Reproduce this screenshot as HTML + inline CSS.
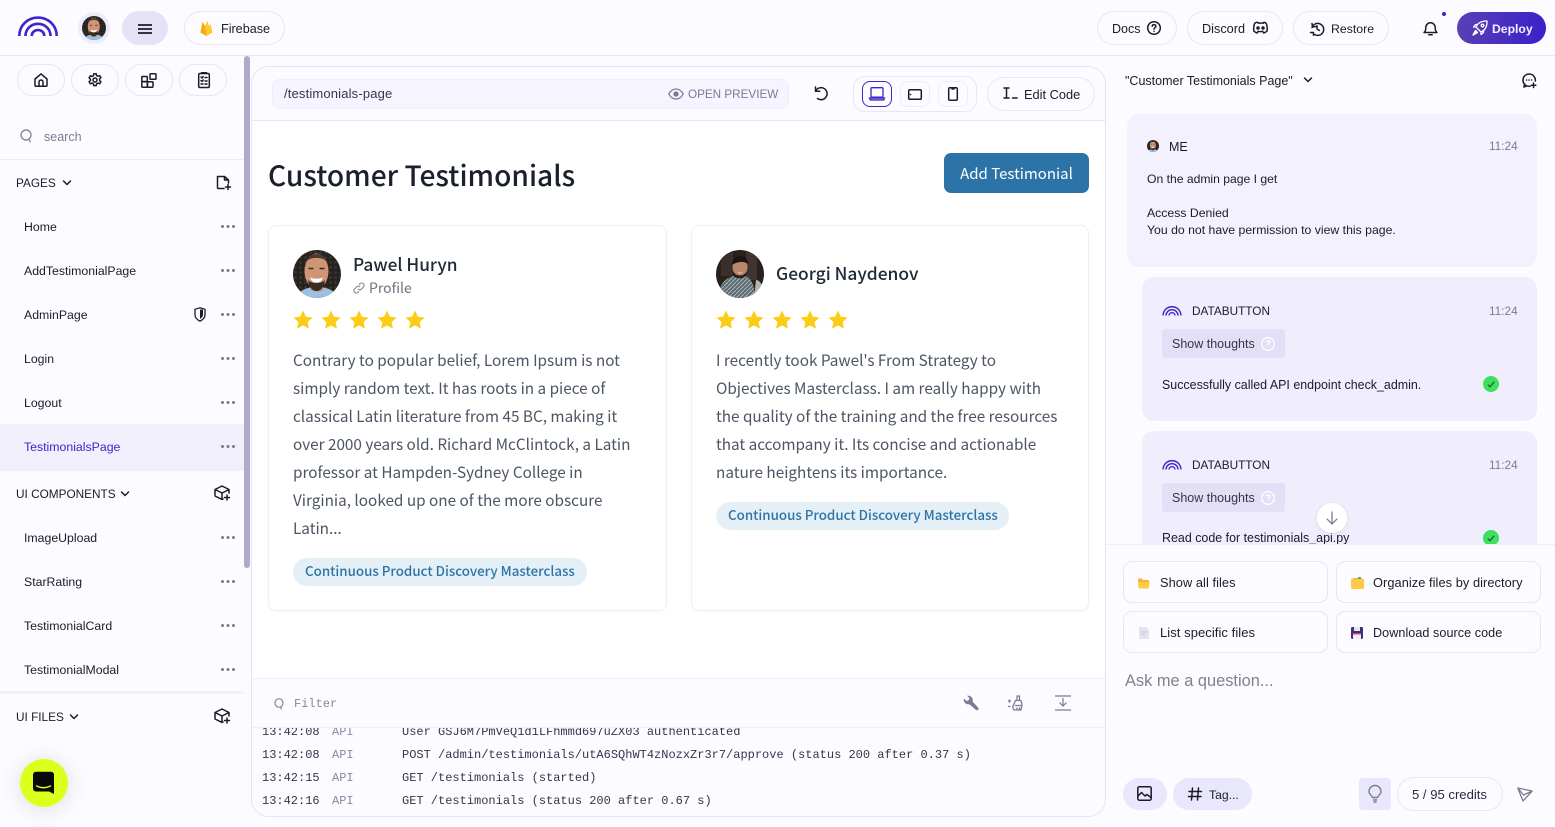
<!DOCTYPE html>
<html><head><meta charset="utf-8"><title>Databutton</title>
<style>
*{box-sizing:border-box}
html,body{margin:0;padding:0;width:1555px;height:827px;overflow:hidden;background:#fcfbff;font-family:"Liberation Sans",sans-serif;color:#1c1b2a}
.a{position:absolute}
.t{position:absolute;white-space:nowrap;line-height:16px;font-size:12.3px;color:#1c1b2a}
.n{font-family:"Noto Sans CJK JP","Liberation Sans",sans-serif}
.pill{position:absolute;border:1px solid #e8e5fa;border-radius:17px;background:#fcfbff}
svg{position:absolute;overflow:visible}
.i{fill:none;stroke:#1c1b2a;stroke-width:1.5;stroke-linecap:round;stroke-linejoin:round}
.dots{position:absolute;left:221px;width:14px;height:3px;background:radial-gradient(circle at 1.5px 1.5px,#7d7a94 1.4px,transparent 1.6px) 0 0/5.5px 3px repeat-x}
.body{font-size:15.3px;color:#4b5563}
.chip{position:absolute;height:28px;border-radius:14px;background:#e5eff6;color:#2c74a8;font-size:13.35px;font-weight:500;line-height:26px;padding-left:12px;white-space:nowrap}
.mono{font-family:"Liberation Mono",monospace;font-size:12px;color:#37354a}
.g{color:#8a87a0}
.sug{position:absolute;border:1px solid #e8e5fa;border-radius:9px;width:205px;height:42px}
.s{font-size:12.8px;letter-spacing:.06px}
.h{font-size:11.8px}
</style></head><body>

<svg width="0" height="0" style="left:0;top:0">
<defs>
<clipPath id="cc"><circle cx="24" cy="24" r="24"/></clipPath>
<pattern id="foam" width="5" height="5" patternUnits="userSpaceOnUse"><rect width="5" height="5" fill="#26231f"/><circle cx="2.500" cy="2.500" r="1.300" fill="#3c3834"/></pattern>
<pattern id="knit" width="4" height="4" patternUnits="userSpaceOnUse"><rect width="4" height="4" fill="#5c6a72"/><path d="M0 4 4 0" stroke="#a9b5bb" stroke-width="1"/></pattern>
<symbol id="paw" viewBox="0 0 48 48"><g clip-path="url(#cc)"><rect width="48" height="48" fill="url(#foam)"/><path d="M3 50c1-9 10-13 21-13s20 4 21 13z" fill="#9cbfe2"/><path d="M18 32h12v8c-3 2-9 2-12 0z" fill="#c48c6c"/><ellipse cx="23.500" cy="21" rx="12" ry="17.500" fill="#cf9576"/><path d="M12 17c0-8 5-13 11.500-13S35 9 35 17c-1-5-2-7-5-8-4-1.500-9-1.500-13 0-3 1-4 3-5 8z" fill="#4d3a2e"/><path d="M15 30c1 7 4 11 8.500 11S31 37 32 30c-2 2-5 3-8.500 3S17 32 15 30z" fill="#3a2a22"/><path d="M17 27.500q6.500 2.500 13 0-1.500 5-6.500 5t-6.500-5z" fill="#fff"/><path d="M15.500 18.500h5M26.500 18.500h5" stroke="#3a2a22" stroke-width="1.400"/></g></symbol>
</defs>
</svg>

<!-- header -->
<div class="a" style="left:0;top:55px;width:1555px;height:1px;background:#e8e5f4"></div>
<svg style="left:18px;top:16px" width="40" height="21" viewBox="0 0 40 21" fill="none" stroke="#3d25c9" stroke-width="2.6"><path d="M1.300 20C1.300 9.500 9.600 1.600 20 1.600S38.700 9.500 38.700 20"/><path d="M7.500 20C7.500 13 13 7.800 20 7.800S32.500 13 32.500 20"/><path d="M13.700 20C13.700 16.500 16.500 14 20 14S26.300 16.500 26.300 20"/></svg>
<div class="a" style="left:78px;top:12px;width:32px;height:32px;border-radius:50%;background:#eeecfb"></div>
<svg style="left:82px;top:16px" width="24" height="24"><use href="#paw" width="24" height="24"/></svg>
<div class="a" style="left:122px;top:11px;width:46px;height:34px;border-radius:17px;background:#e5e2f7"></div>
<svg style="left:138px;top:24px" width="14" height="10"><path d="M0 1h14M0 5h14M0 9h14" stroke="#1c1b2a" stroke-width="1.800"/></svg>
<div class="pill" style="left:184px;top:11px;width:101px;height:34px"></div>
<svg style="left:200px;top:20px" width="13" height="16" viewBox="0 0 13 16"><path d="M.5 12.500 2.500 2 5 6 7.500.5 9 6l1.500-2L12.500 12.500 6.500 16z" fill="#ffca28"/><path d="M.5 12.500 2.500 2 5 6 6.500 16z" fill="#f6a71d"/></svg>
<div class="t" style="left:221px;top:21px;font-size:12.600px">Firebase</div>

<div class="pill" style="left:1097px;top:11px;width:80px;height:34px"></div>
<div class="t" style="left:1112px;top:21px;font-size:12.500px">Docs</div>
<svg style="left:1147px;top:21px" width="14" height="14" viewBox="0 0 14 14" class="i"><circle cx="7" cy="7" r="6.300"/><path d="M5.200 5.300c.2-2.300 3.700-2 3.700 0 0 1.400-1.900 1.400-1.900 2.800M7 10.300v.1"/></svg>
<div class="pill" style="left:1187px;top:11px;width:96px;height:34px"></div>
<div class="t" style="left:1202px;top:21px;font-size:12.700px">Discord</div>
<svg style="left:1253px;top:21px" width="15" height="13" viewBox="0 0 15 13" class="i" stroke-width="1.300"><path d="M4 1.200C2.500 1.500 1.800 2 1.500 2.800.8 4.500.5 7 .8 10c1 1 2 1.700 3.400 2l1-1.700c1.500.4 3 .4 4.500 0l1 1.700c1.400-.3 2.400-1 3.400-2 .3-3-.1-5.500-.7-7.200-.3-.8-1-1.300-2.500-1.600l-.6 1c-1.500-.3-2.900-.3-4.600 0z"/><circle cx="5" cy="7" r="1" fill="#1c1b2a"/><circle cx="10" cy="7" r="1" fill="#1c1b2a"/></svg>
<div class="pill" style="left:1293px;top:11px;width:96px;height:34px"></div>
<svg style="left:1310px;top:22px" width="14" height="14" viewBox="0 0 14 14" class="i"><path d="M2 5.500A6 6 0 1 1 4.500 12.500M2 1.500 2.500 5l3.300-.5M7 3.800V7l2.500 1.500M.5 10.500h3v2.800"/></svg>
<div class="t" style="left:1331px;top:21px;font-size:12.300px">Restore</div>
<svg style="left:1423px;top:21px" width="15" height="15" viewBox="0 0 15 15" class="i"><path d="M1 11.500c1.500-1 1.800-2.500 1.800-5a4.700 4.700 0 0 1 9.400 0c0 2.500.3 4 1.800 5zM5.800 13.800h3.400"/></svg>
<div class="a" style="left:1442px;top:12px;width:4px;height:4px;border-radius:50%;background:#3d25c9"></div>
<div class="a" style="left:1457px;top:12px;width:89px;height:32px;border-radius:16px;background:linear-gradient(100deg,#5a41b4,#3a1fcb)"></div>
<svg style="left:1472px;top:20px" width="16" height="16" viewBox="0 0 16 16" fill="none" stroke="#fff" stroke-width="1.300" stroke-linejoin="round"><path d="M4 7C6 2.500 10 .8 15 1c.2 5-1.500 9-6 11L4 7zM4 7H1.500l2-2.500H6M9 12v2.500l2.500-2V10"/><circle cx="10.500" cy="5.500" r="1.300"/><path d="M3.500 10.500 1 15l4.500-2.500z" fill="#fff"/></svg>
<div class="t" style="left:1492px;top:21px;font-size:12.200px;font-weight:700;color:#f2f0ff">Deploy</div>

<!-- sidebar -->
<div class="pill" style="left:17px;top:64px;width:48px;height:32px"></div>
<div class="pill" style="left:71px;top:64px;width:48px;height:32px"></div>
<div class="pill" style="left:125px;top:64px;width:48px;height:32px"></div>
<div class="pill" style="left:179px;top:64px;width:48px;height:32px"></div>
<svg style="left:34px;top:73px" width="14" height="14" viewBox="0 0 14 14" class="i"><path d="M1 6 7 .9 13 6v6.200a1 1 0 0 1-1 1H2a1 1 0 0 1-1-1zM5 13v-4a2 2 0 0 1 4 0v4"/></svg>
<svg style="left:88px;top:73px" width="14" height="14" viewBox="0 0 14 14" class="i"><path d="M5.800.8h2.400l.4 1.800 1.400.7 1.700-.7 1.200 2-1.300 1.300v1.600l1.300 1.300-1.200 2-1.700-.7-1.400.7-.4 1.800H5.800l-.4-1.800-1.400-.7-1.700.7-1.200-2 1.300-1.300V6.100L1.100 4.800l1.200-2 1.700.7 1.400-.7z"/><circle cx="7" cy="7" r="2"/></svg>
<svg style="left:141px;top:73px" width="16" height="15" viewBox="0 0 16 15" class="i"><rect x=".8" y="3.500" width="5.500" height="5" rx=".8"/><rect x=".8" y="8.800" width="5.500" height="5.400" rx=".8"/><rect x="6.500" y="8.800" width="5.500" height="5.400" rx=".8"/><rect x="9" y=".8" width="6" height="5.500" rx=".8"/></svg>
<svg style="left:198px;top:72px" width="12" height="16" viewBox="0 0 12 16" class="i" stroke-width="1.300"><rect x=".7" y="1.500" width="10.600" height="14" rx="1.200"/><path d="M3.500 1.500V.7h5v.8M3 5l1 1 1.200-1.500M7 5.500h2M3 8.500l1 1 1.200-1.500M7 9h2M3 12h2M7 12h2"/></svg>
<svg style="left:20px;top:129px" width="13" height="14" viewBox="0 0 13 14" fill="none" stroke="#8a87a0" stroke-width="1.400"><circle cx="6" cy="6" r="5"/><path d="M9 10.500 10.500 13"/></svg>
<div class="t" style="left:44px;top:129px;font-size:12.500px;color:#7d7a94">search</div>
<div class="a" style="left:0;top:159px;width:244px;height:1px;background:#eeecf8"></div>

<div class="t h" style="left:16px;top:175px">PAGES</div>
<svg style="left:63px;top:180px" width="8" height="6" class="i"><path d="M.5 1 4 4.500 7.500 1"/></svg>
<svg style="left:216px;top:175px" width="15" height="15" viewBox="0 0 15 15" class="i"><path d="M8 13.500H2.500a1 1 0 0 1-1-1v-11h7l4 3.500v3M8.500 1.500V5h4M12 9.500v5M9.500 12h5"/></svg>

<div class="t" style="left:24px;top:219px">Home</div><div class="dots" style="top:225px"></div>
<div class="t" style="left:24px;top:263px">AddTestimonialPage</div><div class="dots" style="top:269px"></div>
<div class="t" style="left:24px;top:307px">AdminPage</div><div class="dots" style="top:313px"></div>
<svg style="left:194px;top:307px" width="12" height="15" viewBox="0 0 12 15"><path d="M6 .8 11 2.300v5.500c0 3-2.200 5-5 6.400C3.200 12.800 1 10.800 1 7.800V2.300z" fill="none" stroke="#1c1b2a" stroke-width="1.300"/><path d="M6 2.500h3v5c0 2-1.200 3.400-3 4.300z" fill="#1c1b2a"/></svg>
<div class="t" style="left:24px;top:351px">Login</div><div class="dots" style="top:357px"></div>
<div class="t" style="left:24px;top:395px">Logout</div><div class="dots" style="top:401px"></div>
<div class="a" style="left:0;top:424px;width:244px;height:47px;background:#f1effc"></div>
<div class="t" style="left:24px;top:439px;color:#3d25c9">TestimonialsPage</div><div class="dots" style="top:445px"></div>

<div class="t h" style="left:16px;top:486px">UI COMPONENTS</div>
<svg style="left:121px;top:491px" width="8" height="6" class="i"><path d="M.5 1 4 4.500 7.500 1"/></svg>
<svg style="left:214px;top:485px" width="17" height="16" viewBox="0 0 17 16" class="i"><path d="M9 14 8 14.400 1 11V4.500L8 1l7 3.500V8M1 4.500 8 8l7-3.500M8 8v6.400M13 10v5M10.500 12.500h5"/></svg>

<div class="t" style="left:24px;top:530px">ImageUpload</div><div class="dots" style="top:536px"></div>
<div class="t" style="left:24px;top:574px">StarRating</div><div class="dots" style="top:580px"></div>
<div class="t" style="left:24px;top:618px">TestimonialCard</div><div class="dots" style="top:624px"></div>
<div class="t" style="left:24px;top:662px">TestimonialModal</div><div class="dots" style="top:668px"></div>
<div class="a" style="left:0;top:691px;width:244px;height:3px;background:#f1effa"></div>
<div class="t h" style="left:16px;top:709px">UI FILES</div>
<svg style="left:70px;top:714px" width="8" height="6" class="i"><path d="M.5 1 4 4.500 7.500 1"/></svg>
<svg style="left:214px;top:708px" width="17" height="16" viewBox="0 0 17 16" class="i"><path d="M9 14 8 14.400 1 11V4.500L8 1l7 3.500V8M1 4.500 8 8l7-3.500M8 8v6.400M13 10v5M10.500 12.500h5"/></svg>
<div class="a" style="left:244px;top:56px;width:6px;height:512px;border-radius:3px;background:#aeaaca"></div>

<div class="a" style="left:20px;top:759px;width:48px;height:48px;border-radius:50%;background:#dcff1c;box-shadow:0 2px 24px rgba(0,0,0,.12)"></div>
<svg style="left:33px;top:771px" width="22" height="24" viewBox="0 0 22 24"><path d="M3 .8h15a3 3 0 0 1 3 3V23l-5-2.500H3a3 3 0 0 1-3-3V3.800A3 3 0 0 1 3 .8z" fill="#0a0a0a"/><path d="M3.500 15q7 3.500 14 0" fill="none" stroke="#dcff1c" stroke-width="1.400" stroke-linecap="round"/></svg>

<!-- center panel -->
<div class="a" style="left:251px;top:66px;width:855px;height:751px;border:1px solid #e6e3f8;border-radius:18px;background:#fff;overflow:hidden">
  <div class="a" style="left:0;top:0;width:853px;height:54px;background:#fcfbff;border-bottom:1px solid #e8e5fa"></div>
  <div class="a" style="left:0;top:611px;width:853px;height:50px;background:#fcfbff;border-top:1px solid #efedf8;border-bottom:1px solid #efedf8"></div>
  <div class="a" style="left:0;top:661px;width:853px;height:90px;background:#fcfbff"></div>
</div>
<div class="a" style="left:272px;top:79px;width:517px;height:30px;border:1px solid #efedfb;border-radius:8px;background:#f6f4fe"></div>
<div class="t" style="left:284px;top:86px;font-size:13px;letter-spacing:.16px;color:#37354a">/testimonials-page</div>
<svg style="left:668px;top:88px" width="16" height="12" viewBox="0 0 16 12" fill="none" stroke="#7d7a94" stroke-width="1.300"><path d="M.8 6C2.500 2.800 5 1 8 1s5.500 1.800 7.200 5C13.500 9.200 11 11 8 11S2.500 9.200.8 6z"/><circle cx="8" cy="6" r="2" fill="#7d7a94"/></svg>
<div class="t" style="left:688px;top:87px;font-size:11.700px;color:#7d7a94">OPEN PREVIEW</div>
<svg style="left:814px;top:86px" width="15" height="15" viewBox="0 0 15 15" class="i"><path d="M1.500 1v4.300h4.300M1.700 5A6 6 0 1 1 3.500 12.500"/></svg>
<div class="a" style="left:853px;top:76px;width:124px;height:36px;border:1px solid #e8e5fa;border-radius:12px"></div>
<div class="a" style="left:862px;top:81px;width:30px;height:26px;border:1.300px solid #3d25c9;border-radius:8px"></div>
<svg style="left:869px;top:87px" width="16" height="14" viewBox="0 0 16 14" fill="none" stroke="#3d25c9" stroke-width="1.300"><rect x="2" y=".7" width="12" height="9.500" rx="1"/><path d="M.5 11h15l-.8 2H1.300z" fill="#b5a9ef"/></svg>
<div class="a" style="left:900px;top:81px;width:30px;height:26px;border:1px solid #eeecfb;border-radius:8px"></div>
<svg style="left:908px;top:89px" width="14" height="11" viewBox="0 0 14 11" class="i" stroke-width="1.300"><rect x=".7" y=".7" width="12.600" height="9.600" rx="1.200"/><path d="M2.500 5.500h.1"/></svg>
<div class="a" style="left:938px;top:81px;width:30px;height:26px;border:1px solid #eeecfb;border-radius:8px"></div>
<svg style="left:948px;top:87px" width="10" height="14" viewBox="0 0 10 14" class="i" stroke-width="1.300"><rect x=".7" y=".7" width="8.600" height="12.600" rx="1.300"/><path d="M4 2h2"/></svg>
<div class="pill" style="left:987px;top:77px;width:108px;height:34px"></div>
<svg style="left:1003px;top:87px" width="15" height="13" viewBox="0 0 15 13" class="i" stroke-linecap="butt"><path d="M1 1h5M3.500 1v10M1 11h5M9.500 11H14"/></svg>
<div class="t" style="left:1024px;top:87px;font-size:12.800px">Edit Code</div>

<!-- content -->
<div class="t n" id="h" style="left:268px;top:155px;font-size:28.150px;line-height:40px;color:#1a202c;font-weight:500">Customer Testimonials</div>
<div class="a n" style="left:944px;top:153px;width:145px;height:40px;border-radius:7px;background:#2c74a8;color:#fff;font-size:15px;line-height:41px;text-align:center">Add Testimonial</div>

<div class="a" style="left:268px;top:225px;width:399px;height:386px;border:1px solid #f0eff4;border-radius:8px;box-shadow:0 1px 2px rgba(0,0,0,.03)"></div>
<div class="a" style="left:691px;top:225px;width:398px;height:386px;border:1px solid #f0eff4;border-radius:8px;box-shadow:0 1px 2px rgba(0,0,0,.03)"></div>

<svg style="left:293px;top:250px" width="48" height="48"><use href="#paw" width="48" height="48"/></svg>
<div class="t n" style="left:353px;top:253px;font-size:17.300px;line-height:22px;color:#1f2937;font-weight:500">Pawel Huryn</div>
<svg style="left:353px;top:282px" width="12" height="12" viewBox="0 0 12 12" fill="none" stroke="#7f8794" stroke-width="1.100"><path d="M5 7a2.300 2.300 0 0 0 3.400.1l2-2A2.400 2.400 0 0 0 7 1.700L6 2.700M7 5a2.300 2.300 0 0 0-3.400-.1l-2 2A2.400 2.400 0 0 0 5 10.300l1-1"/></svg>
<div class="t n" style="left:369px;top:280px;font-size:14px;color:#6b7280">Profile</div>
<svg style="left:293px;top:310px" width="132" height="20" viewBox="0 0 132 20" fill="#fccc16"><path id="s" d="M10 .5l2.900 6.200 6.700.8-5 4.600 1.400 6.700L10 15.400l-6 3.400 1.400-6.700-5-4.600 6.700-.8z"/><use href="#s" x="28"/><use href="#s" x="56"/><use href="#s" x="84"/><use href="#s" x="112"/></svg>

<div class="t n body" style="left:293px;top:346px;line-height:28px">Contrary to popular belief, Lorem Ipsum is not</div>
<div class="t n body" style="left:293px;top:374px;line-height:28px">simply random text. It has roots in a piece of</div>
<div class="t n body" style="left:293px;top:402px;line-height:28px">classical Latin literature from 45 BC, making it</div>
<div class="t n body" style="left:293px;top:430px;line-height:28px">over 2000 years old. Richard McClintock, a Latin</div>
<div class="t n body" style="left:293px;top:458px;line-height:28px">professor at Hampden-Sydney College in</div>
<div class="t n body" style="left:293px;top:486px;line-height:28px">Virginia, looked up one of the more obscure</div>
<div class="t n body" style="left:293px;top:514px;line-height:28px">Latin...</div>
<div class="chip n" style="left:293px;top:558px;width:294px">Continuous Product Discovery Masterclass</div>

<svg style="left:716px;top:250px" width="48" height="48" viewBox="0 0 48 48"><g clip-path="url(#cc)"><rect width="48" height="48" fill="#2a211d"/><rect x="5" y="0" width="12" height="26" fill="#3a2f29"/><rect x="30" y="0" width="11" height="30" fill="#3f342e"/><path d="M40 30c4 0 8 6 8 18H38z" fill="#b5b3ac"/><path d="M2 50c0-14 6-21 15-24 5 3 9 3 13 0 6 3 9 10 9 24z" fill="url(#knit)"/><ellipse cx="24" cy="17" rx="7.500" ry="9.500" fill="#b9876a"/><path d="M16 15c0-6 4-9 8-9 5 0 8 3 8 8-4-3-10-3-16 1z" fill="#1b1512"/><path d="M17 21c3 6 11 6 14 0l-1 5-6 2-6-2z" fill="#2b1d17"/><path d="M21 22q3 1.500 6 0-3 3-6 0z" fill="#fff"/></g></svg>
<div class="t n" style="left:776px;top:263px;font-size:17.400px;line-height:22px;color:#1f2937;font-weight:500">Georgi Naydenov</div>
<svg style="left:716px;top:310px" width="132" height="20" viewBox="0 0 132 20" fill="#fccc16"><use href="#s"/><use href="#s" x="28"/><use href="#s" x="56"/><use href="#s" x="84"/><use href="#s" x="112"/></svg>
<div class="t n body" style="left:716px;top:346px;line-height:28px">I recently took Pawel's From Strategy to</div>
<div class="t n body" style="left:716px;top:374px;line-height:28px">Objectives Masterclass. I am really happy with</div>
<div class="t n body" style="left:716px;top:402px;line-height:28px">the quality of the training and the free resources</div>
<div class="t n body" style="left:716px;top:430px;line-height:28px">that accompany it. Its concise and actionable</div>
<div class="t n body" style="left:716px;top:458px;line-height:28px">nature heightens its importance.</div>
<div class="chip n" style="left:716px;top:502px;width:293px">Continuous Product Discovery Masterclass</div>

<!-- logs -->
<svg style="left:274px;top:698px" width="10" height="12" viewBox="0 0 10 12" fill="none" stroke="#8a87a0" stroke-width="1.200"><ellipse cx="5" cy="5" rx="4" ry="4.300"/><path d="M6.500 9 7.500 11.500"/></svg>
<div class="t mono g" style="left:294px;top:696px">Filter</div>
<svg style="left:963px;top:695px" width="16" height="16" viewBox="0 0 16 16" fill="#7d7a94"><path d="M1 3.500 3.500 6 6 5 6.500 3 4 .8A4.500 4.500 0 0 1 9.500 6.500L15 12.500a1.500 1.500 0 0 1-2.300 2.300L6.500 9.200A4.500 4.500 0 0 1 1 3.500z"/></svg>
<svg style="left:1007px;top:695px" width="16" height="16" viewBox="0 0 16 16" fill="none" stroke="#7d7a94" stroke-width="1.300" stroke-linejoin="round"><path d="M10 1h2.500v4.500H10zM8.500 5.500h5.500l1 4-1 5.500H7c-1.500-1.500-1.500-4 0-6zM8 10.500h6M10 15v-2.500M12.500 15v-2.500M1 6h3M2.500 4.500v3M1 11.500h2.500"/></svg>
<svg style="left:1055px;top:695px" width="16" height="16" viewBox="0 0 16 16" fill="none" stroke="#7d7a94" stroke-width="1.200"><path d="M0 1h16M0 15h16M8 3v8M4.500 7.500 8 11l3.500-3.500"/></svg>

<div class="a" style="left:252px;top:728px;width:853px;height:88px;overflow:hidden">
 <div class="t mono" style="left:10px;top:-4px">13:42:08</div><div class="t mono g" style="left:80px;top:-4px">API</div><div class="t mono" style="left:150px;top:-4px">User GSJ6M7PmVeQ1d1LFhmmd697uZX03 authenticated</div>
 <div class="t mono" style="left:10px;top:19px">13:42:08</div><div class="t mono g" style="left:80px;top:19px">API</div><div class="t mono" style="left:150px;top:19px">POST /admin/testimonials/utA6SQhWT4zNozxZr3r7/approve (status 200 after 0.37 s)</div>
 <div class="t mono" style="left:10px;top:42px">13:42:15</div><div class="t mono g" style="left:80px;top:42px">API</div><div class="t mono" style="left:150px;top:42px">GET /testimonials (started)</div>
 <div class="t mono" style="left:10px;top:65px">13:42:16</div><div class="t mono g" style="left:80px;top:65px">API</div><div class="t mono" style="left:150px;top:65px">GET /testimonials (status 200 after 0.67 s)</div>
</div>

<!-- right panel -->
<div class="t" style="left:1125px;top:73px;font-size:12.500px">"Customer Testimonials Page"</div>
<svg style="left:1304px;top:77px" width="8" height="6" class="i"><path d="M.5 1 4 4.500 7.500 1"/></svg>
<svg style="left:1522px;top:73px" width="15" height="15" viewBox="0 0 15 15" class="i" stroke-width="1.300"><path d="M8 13.300A6.200 6.200 0 1 1 13.300 8M2.800 11.200 1.800 14l2.500-1M11.500 10v4.500M9.200 12.200h4.600"/><path d="M4.500 7h.1M7 7h.1M9.500 7h.1"/></svg>

<div class="a" style="left:1127px;top:114px;width:410px;height:153px;border-radius:12px;background:#f3f1fd"></div>
<svg style="left:1147px;top:140px" width="12" height="12"><use href="#paw" width="12" height="12"/></svg>
<div class="t" style="left:1169px;top:139px;font-size:12.500px">ME</div>
<div class="t" style="left:1489px;top:138px;font-size:11.800px;color:#7d7a94">11:24</div>
<div class="t" style="left:1147px;top:171px;font-size:12.150px">On the admin page I get</div>
<div class="t" style="left:1147px;top:205px;font-size:12.250px">Access Denied</div>
<div class="t" style="left:1147px;top:222px;font-size:12.250px">You do not have permission to view this page.</div>

<div class="a" style="left:1142px;top:277px;width:395px;height:144px;border-radius:12px;background:#f0eefc"></div>
<svg style="left:1162px;top:306px" width="20" height="10" viewBox="0 0 40 21" fill="none" stroke="#3d25c9" stroke-width="3"><path d="M1.300 20C1.300 9.500 9.600 1.600 20 1.600S38.700 9.500 38.700 20"/><path d="M7.500 20C7.500 13 13 7.800 20 7.800S32.500 13 32.500 20"/><path d="M13.700 20C13.700 16.500 16.500 14 20 14S26.300 16.500 26.300 20"/></svg>
<div class="t" style="left:1192px;top:303px;font-size:11.800px">DATABUTTON</div>
<div class="t" style="left:1489px;top:303px;font-size:11.800px;color:#7d7a94">11:24</div>
<div class="a" style="left:1162px;top:329px;width:123px;height:29px;border-radius:3px;background:#e3dff6"></div>
<div class="t" style="left:1172px;top:336px;font-size:12.500px;color:#37354a">Show thoughts</div>
<svg style="left:1261px;top:337px" width="14" height="14" viewBox="0 0 14 14" fill="none" stroke="#fff" stroke-width="1.300"><circle cx="7" cy="7" r="6.300"/><path d="M5.300 5.500c.2-2 3.500-1.800 3.500 0 0 1.300-1.800 1.300-1.800 2.600M7 10v.3"/></svg>
<div class="t" style="left:1162px;top:377px;font-size:12.450px">Successfully called API endpoint check_admin.</div>
<div class="a" style="left:1483px;top:376px;width:16px;height:16px;border-radius:50%;background:#3de05f"></div>
<svg style="left:1487px;top:381px" width="8" height="7" fill="none" stroke="#1f5a30" stroke-width="1.200"><path d="M.8 3.500 3 5.800 7.200.8"/></svg>

<div class="a" style="left:1142px;top:431px;width:395px;height:113px;border-radius:12px 12px 0 0;background:#f0eefc"></div>
<svg style="left:1162px;top:460px" width="20" height="10" viewBox="0 0 40 21" fill="none" stroke="#3d25c9" stroke-width="3"><path d="M1.300 20C1.300 9.500 9.600 1.600 20 1.600S38.700 9.500 38.700 20"/><path d="M7.500 20C7.500 13 13 7.800 20 7.800S32.500 13 32.500 20"/><path d="M13.700 20C13.700 16.500 16.500 14 20 14S26.300 16.500 26.300 20"/></svg>
<div class="t" style="left:1192px;top:457px;font-size:11.800px">DATABUTTON</div>
<div class="t" style="left:1489px;top:457px;font-size:11.800px;color:#7d7a94">11:24</div>
<div class="a" style="left:1162px;top:483px;width:123px;height:29px;border-radius:3px;background:#e3dff6"></div>
<div class="t" style="left:1172px;top:490px;font-size:12.500px;color:#37354a">Show thoughts</div>
<svg style="left:1261px;top:491px" width="14" height="14" viewBox="0 0 14 14" fill="none" stroke="#fff" stroke-width="1.300"><circle cx="7" cy="7" r="6.300"/><path d="M5.300 5.500c.2-2 3.500-1.800 3.500 0 0 1.300-1.800 1.300-1.800 2.600M7 10v.3"/></svg>
<div class="a" style="left:1142px;top:520px;width:395px;height:25px;overflow:hidden">
 <div class="t" style="left:20px;top:10px;font-size:12.450px">Read code for testimonials_api.py</div>
 <div class="a" style="left:341px;top:10px;width:16px;height:16px;border-radius:50%;background:#3de05f"></div>
 <svg style="left:345px;top:15px" width="8" height="7" fill="none" stroke="#1f5a30" stroke-width="1.200"><path d="M.8 3.500 3 5.800 7.200.8"/></svg>
</div>
<div class="a" style="left:1317px;top:503px;width:30px;height:30px;border-radius:50%;background:#fff;box-shadow:0 1px 4px rgba(60,50,120,.12)"></div>
<svg style="left:1326px;top:511px" width="12" height="14" viewBox="0 0 12 14" fill="none" stroke="#7d7a94" stroke-width="1.300"><path d="M6 .5V13M.8 7.800 6 13l5.200-5.200"/></svg>
<div class="a" style="left:1106px;top:544px;width:449px;height:1px;background:#efedf8"></div>

<div class="sug" style="left:1123px;top:561px"></div>
<svg style="left:1138px;top:578px" width="12" height="11" viewBox="0 0 12 11"><path d="M0 1.500A1 1 0 0 1 1 .5h3l1 1.500h5a1 1 0 0 1 1 1v1H0z" fill="#f9b233"/><path d="M0 4h11.800L10.500 10.500H1.500a1 1 0 0 1-1-1z" fill="#ffcb45"/></svg>
<div class="t s" style="left:1160px;top:575px">Show all files</div>
<div class="sug" style="left:1336px;top:561px"></div>
<svg style="left:1351px;top:577px" width="13" height="12" viewBox="0 0 13 12"><rect y="1.500" width="13" height="10.500" rx="1.500" fill="#ffcb45"/><path d="M1 2.500 3 1h4l1 1.500z" fill="#f9b233"/><rect x="7" y="0" width="3" height="2" fill="#4cb56f"/></svg>
<div class="t s" style="left:1373px;top:575px">Organize files by directory</div>
<div class="sug" style="left:1123px;top:611px"></div>
<svg style="left:1139px;top:627px" width="10" height="12" viewBox="0 0 10 12"><path d="M0 0h7l3 3v9H0z" fill="#e6e2f2"/><path d="M2 5h6M2 7.500h4" stroke="#c9c5dd"/></svg>
<div class="t s" style="left:1160px;top:625px;font-size:13px">List specific files</div>
<div class="sug" style="left:1336px;top:611px"></div>
<svg style="left:1351px;top:627px" width="12" height="12" viewBox="0 0 12 12"><rect width="12" height="12" rx="1.500" fill="#3f2f7f"/><rect x="3" y="0" width="6" height="4" fill="#e7e4f4"/><rect x="2" y="6" width="8" height="6" fill="#f1effa"/><rect x="2" y="6" width="8" height="1.500" fill="#d94a4a"/></svg>
<div class="t s" style="left:1373px;top:625px;font-size:12.600px">Download source code</div>

<div class="t" style="left:1125px;top:672px;font-size:16.400px;line-height:18px;color:#82808e">Ask me a question...</div>

<div class="a" style="left:1123px;top:778px;width:44px;height:32px;border-radius:16px;background:#e9e7fb"></div>
<svg style="left:1137px;top:786px" width="15" height="15" viewBox="0 0 15 15" class="i"><rect x=".8" y=".8" width="13.400" height="13.400" rx="1.500"/><path d="M1 10 4.500 6.500l3.500 3.500 2-1.500 4 3"/></svg>
<div class="a" style="left:1173px;top:778px;width:79px;height:32px;border-radius:16px;background:#e9e7fb"></div>
<svg style="left:1188px;top:787px" width="14" height="14" viewBox="0 0 14 14" class="i"><path d="M4.500 1 3.500 13M10.500 1 9.500 13M1 4.500h12.500M.5 9.500H13"/></svg>
<div class="t" style="left:1209px;top:787px;font-size:12.200px">Tag...</div>
<div class="a" style="left:1359px;top:778px;width:32px;height:32px;border-radius:4px;background:#e9e7fb"></div>
<svg style="left:1368px;top:785px" width="14" height="18" viewBox="0 0 14 18" fill="none" stroke="#7d7a94" stroke-width="1.400"><path d="M4.500 12.500C4 10.500 1 9.500 1 6.500a6 6 0 0 1 12 0c0 3-3 4-3.500 6zM5 15h4M5.500 17h3"/></svg>
<div class="pill" style="left:1397px;top:777px;width:106px;height:34px"></div>
<div class="t" style="left:1412px;top:787px;font-size:13.100px;color:#2c2a3e">5 / 95 credits</div>
<svg style="left:1517px;top:787px" width="16" height="15" viewBox="0 0 16 15" fill="none" stroke="#7d7a94" stroke-width="1.300" stroke-linejoin="round"><path d="M.8 1 15.200 4 6 14zM.8 1 6.500 8 15.200 4"/></svg>

</body></html>
